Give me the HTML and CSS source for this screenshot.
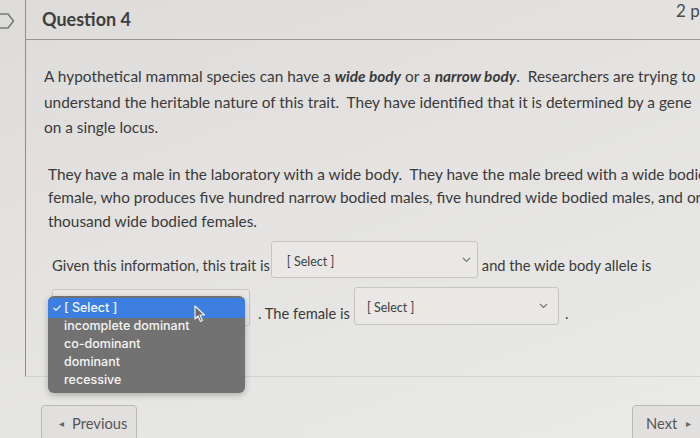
FILE: index.html
```html
<!DOCTYPE html>
<html>
<head>
<meta charset="utf-8">
<link rel="stylesheet" href="styles.css">
</head>
<body>
<div class="page">
  <div class="main">
    <div class="gutter">
      <svg class="flag" width="16" height="20" viewBox="0 0 16 20"><path d="M-6 3 H8 L13.5 10 L8 17 H-6" fill="none" stroke="#7a7a7a" stroke-width="1.6" stroke-linejoin="round"/></svg>
    </div>
    <div class="question">
      <div class="q-header">
        <span class="q-title">Question 4</span>
        <span class="q-points">2 pts</span>
      </div>
      <div class="q-body">
        <p class="para p1">A hypothetical mammal species can have a <b><i>wide body</i></b> or a <b><i>narrow body</i></b>.&nbsp; Researchers are trying to<br>understand the heritable nature of this trait.&nbsp; They have identified that it is determined by a gene<br>on a single locus.</p>
        <p class="para p2">They have a male in the laboratory with a wide body.&nbsp; They have the male breed with a wide bodied<br>female, who produces five hundred narrow bodied males, five hundred wide bodied males, and one<br>thousand wide bodied females.</p>
        <div class="row r1">
          <span class="txt">Given this information, this trait is</span>
          <div class="select s1"><span class="sel-text">[ Select ]</span><svg class="chev" width="9" height="6" viewBox="0 0 9 6"><path d="M1 1 L4.5 4.5 L8 1" fill="none" stroke="#777" stroke-width="1.2"/></svg></div>
          <span class="txt">and the wide body allele is</span>
        </div>
        <div class="row r2">
          <div class="select s2">
            <svg class="chev" width="9" height="6" viewBox="0 0 9 6"><path d="M1 1 L4.5 4.5 L8 1" fill="none" stroke="#777" stroke-width="1.2"/></svg>
            <div class="menu">
              <div class="opt active"><span class="check">✓</span>[ Select ]</div>
              <div class="opt">incomplete dominant</div>
              <div class="opt">co-dominant</div>
              <div class="opt">dominant</div>
              <div class="opt">recessive</div>
              <svg class="cursor" width="12" height="18" viewBox="0 0 12 18"><path d="M1 1 L1 14 L4 11 L6.5 16.5 L8.5 15.5 L6 10 L10.5 10 Z" fill="#6a6a6a" stroke="#eeeeee" stroke-width="1.2" stroke-linejoin="round"/></svg>
            </div>
          </div>
          <span class="txt dot-lead">.&nbsp;The female is</span>
          <div class="select s3"><span class="sel-text">[ Select ]</span><svg class="chev" width="9" height="6" viewBox="0 0 9 6"><path d="M1 1 L4.5 4.5 L8 1" fill="none" stroke="#777" stroke-width="1.2"/></svg></div>
          <span class="txt">.</span>
        </div>
      </div>
    </div>
  </div>
  <div class="nav">
    <button class="btn prev"><span class="tri">◂</span>Previous</button>
    <button class="btn next">Next<span class="tri">▸</span></button>
  </div>
</div>
</body>
</html>
```
FILE: styles.css
```css
html, body {
  margin: 0;
  padding: 0;
}
body {
  width: 700px;
  height: 438px;
  overflow: hidden;
  background: linear-gradient(160deg, #dddcda 0%, #e4e3e1 45%, #eaeae8 100%);
  font-family: Lato, "Noto Sans", sans-serif;
  color: #3a3a3a;
}
.page {
  width: 700px;
  height: 438px;
  display: flex;
  flex-direction: column;
}
.main {
  display: flex;
}
.gutter {
  width: 25px;
  flex: none;
  padding-top: 11px;
}
.flag {
  display: block;
}
.question {
  width: 700px;
  flex: none;
  border-left: 1px solid #8d8d8b;
  border-bottom: 1px solid #d3d2d0;
  height: 377px;
  box-sizing: border-box;
}
.q-header {
  height: 40px;
  box-sizing: border-box;
  border-bottom: 1px solid #979795;
  display: flex;
  justify-content: space-between;
  align-items: flex-start;
  padding-left: 16px;
}
.q-title {
  font-size: 18px;
  font-weight: 700;
  color: #3e3e3e;
  margin-top: 8px;
}
.q-points {
  font-size: 17px;
  color: #4a4a4a;
  width: 49px;
  white-space: nowrap;
}
.q-body {
  padding-left: 18px;
}
.para {
  margin: 0;
  font-size: 15.4px;
  line-height: 25.5px;
  white-space: nowrap;
}
.p1 {
  margin-top: 24px;
}
.p2 {
  margin-top: 22px;
  padding-left: 4px;
  line-height: 23.5px;
}
.row {
  display: flex;
  align-items: center;
  font-size: 14.7px;
  padding-left: 8px;
  white-space: nowrap;
}
.row .txt {
  margin-top: 10px;
}
.r1 {
  margin-top: 8px;
  height: 37px;
}
.r2 {
  margin-top: 11px;
  height: 37px;
}
.select {
  position: relative;
  height: 37px;
  box-sizing: border-box;
  border: 1px solid #c6c5c3;
  border-radius: 3px;
  background: #e9e8e6;
  display: flex;
  align-items: center;
  justify-content: space-between;
}
.sel-text {
  font-size: 12.5px;
  color: #404040;
  margin-top: 3px;
}
.chev {
  display: block;
}
.s1 {
  width: 207px;
  margin: 0 4px 0 1px;
  padding: 0 6px 0 15px;
}
.s2 {
  width: 198px;
  padding: 0 6px 0 15px;
  margin-right: 6px;
  justify-content: flex-end;
}
.s3 {
  width: 205px;
  margin: -3px 6px 0 4px;
  height: 38px;
  padding: 0 10px 0 12px;
}
.dot-lead {
  margin-left: 2px;
}
.menu {
  position: absolute;
  left: -5px;
  top: 6px;
  width: 197px;
  height: 97px;
  box-sizing: border-box;
  padding-top: 2px;
  background: #727272;
  border-radius: 6px;
  box-shadow: 0 2px 6px rgba(0,0,0,0.25);
  font-family: Inter, "Liberation Sans", sans-serif;
  font-size: 12.5px;
  font-weight: 500;
  color: #f5f5f5;
  overflow: hidden;
}
.opt {
  height: 18px;
  line-height: 18px;
  padding-left: 16px;
  position: relative;
}
.opt.active {
  background: #3c7fe0;
  height: 20px;
  line-height: 20px;
  margin-bottom: -1px;
}
.check {
  position: absolute;
  left: 4px;
  top: 0;
  font-size: 11px;
}
.cursor {
  position: absolute;
  left: 146px;
  top: 9px;
}
.nav {
  display: flex;
  justify-content: space-between;
  padding-left: 41px;
  margin-top: 28px;
  margin-right: -12px;
}
.btn {
  font-family: Lato, "Noto Sans", sans-serif;
  font-size: 14.7px;
  color: #555;
  background: #e1e0de;
  border: 1px solid #b9b8b6;
  border-radius: 4px;
  height: 36px;
  padding: 0 12px;
  display: flex;
  align-items: center;
}
.prev {
  width: 96px;
  padding-left: 17px;
}
.next {
  width: 80px;
  padding-left: 13px;
}
.prev .tri {
  font-size: 10px;
  margin-right: 8px;
  color: #666;
}
.next .tri {
  font-size: 10px;
  margin-left: 9px;
  color: #666;
}
```
